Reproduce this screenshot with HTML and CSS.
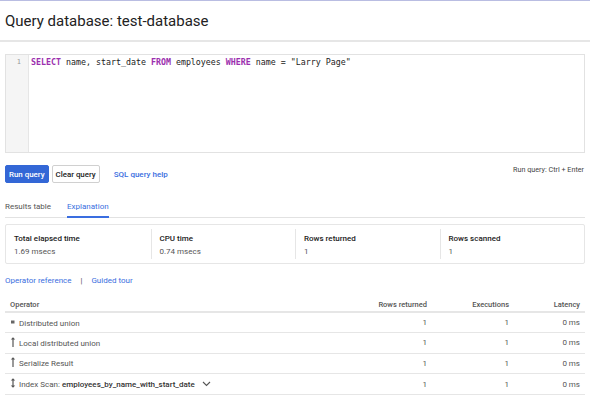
FILE: index.html
```html
<!DOCTYPE html>
<html lang="en">
<head>
    <meta charset="UTF-8">
    <title>Query database: test-database</title>
    <link rel="stylesheet" href="styles.css">
</head>
<body>
    <div class="page">
        <header class="title-bar">
            <h1>Query database: test-database</h1>
        </header>

        <div class="content">
            <div class="editor">
                <div class="gutter">1</div>
                <div class="code"><span class="kw">SELECT</span> name, start_date <span class="kw">FROM</span> employees <span class="kw">WHERE</span> name = "Larry Page"</div>
            </div>

            <div class="actions">
                <button class="btn btn-primary">Run query</button>
                <button class="btn">Clear query</button>
                <a class="link help-link" href="#">SQL query help</a>
                <span class="shortcut">Run query: Ctrl + Enter</span>
            </div>

            <div class="tabs">
                <div class="tab">Results table</div>
                <div class="tab active">Explanation</div>
            </div>

            <div class="stats">
                <div class="stat">
                    <h3>Total elapsed time</h3>
                    <p>1.69 msecs</p>
                </div>
                <div class="stat">
                    <h3>CPU time</h3>
                    <p>0.74 msecs</p>
                </div>
                <div class="stat">
                    <h3>Rows returned</h3>
                    <p>1</p>
                </div>
                <div class="stat">
                    <h3>Rows scanned</h3>
                    <p>1</p>
                </div>
            </div>

            <div class="ref-links">
                <a class="link" href="#">Operator reference</a>
                <span class="sep">|</span>
                <a class="link" href="#">Guided tour</a>
            </div>

            <table class="plan">
                <thead>
                    <tr>
                        <th class="op">Operator</th>
                        <th class="num">Rows returned</th>
                        <th class="num">Executions</th>
                        <th class="num">Latency</th>
                    </tr>
                </thead>
                <tbody>
                    <tr>
                        <td class="op"><span class="ico"><svg width="8" height="10" viewBox="0 0 8 10"><rect x="1" y="3.5" width="3.5" height="3" fill="#666"/></svg></span>Distributed union</td>
                        <td class="num">1</td>
                        <td class="num">1</td>
                        <td class="num">0 ms</td>
                    </tr>
                    <tr>
                        <td class="op"><span class="ico"><svg width="8" height="10" viewBox="0 0 8 10"><path d="M3 10V1.5" stroke="#555" stroke-width="1.2" fill="none"/><path d="M0.8 2.6L3 0.3 5.2 2.6z" fill="#555"/></svg></span>Local distributed union</td>
                        <td class="num">1</td>
                        <td class="num">1</td>
                        <td class="num">0 ms</td>
                    </tr>
                    <tr>
                        <td class="op"><span class="ico"><svg width="8" height="10" viewBox="0 0 8 10"><path d="M3 10V1.5" stroke="#555" stroke-width="1.2" fill="none"/><path d="M0.8 2.6L3 0.3 5.2 2.6z" fill="#555"/></svg></span>Serialize Result</td>
                        <td class="num">1</td>
                        <td class="num">1</td>
                        <td class="num">0 ms</td>
                    </tr>
                    <tr>
                        <td class="op"><span class="ico"><svg width="8" height="10" viewBox="0 0 8 10"><path d="M3 1.5v7" stroke="#555" stroke-width="1.2" fill="none"/><path d="M0.8 2.6L3 0.3 5.2 2.6z M0.8 7.4L3 9.7 5.2 7.4z" fill="#555"/></svg></span>Index Scan: <span class="idx">employees_by_name_with_start_date</span><svg class="chev" width="9" height="6" viewBox="0 0 9 6"><path d="M1 1l3.5 3.5L8 1" stroke="#555" stroke-width="1.1" fill="none"/></svg></td>
                        <td class="num">1</td>
                        <td class="num">1</td>
                        <td class="num">0 ms</td>
                    </tr>
                </tbody>
            </table>
        </div>
    </div>
</body>
</html>
```

FILE: styles.css
```css
* {
    margin: 0;
    padding: 0;
    box-sizing: border-box;
}

body {
    font-family: Roboto, 'Liberation Sans', Arial, sans-serif;
    color: #333;
    background-color: white;
}

.page {
    border-top: 1px solid #b9bde2;
}

.title-bar {
    height: 41px;
    border-bottom: 2px solid #e6e6e6;
    padding: 10px 5px 0;
}

.title-bar h1 {
    font-size: 15px;
    font-weight: 400;
    color: #222;
    line-height: 20px;
}

.content {
    padding: 12px 5px 0;
}

.editor {
    display: flex;
    height: 99px;
    border: 1px solid #e2e2e2;
}

.gutter {
    width: 23px;
    background-color: #f5f5f5;
    border-right: 1px solid #e6e6e6;
    color: #999;
    font-family: 'DejaVu Sans Mono', 'Liberation Mono', monospace;
    font-size: 7px;
    text-align: right;
    padding: 3px 7px 0 0;
}

.code {
    padding: 2px 0 0 2px;
    font-family: 'DejaVu Sans Mono', 'Liberation Mono', monospace;
    font-size: 8.3px;
    line-height: 11px;
    color: #222;
}

.kw {
    color: #9b2fae;
    font-weight: bold;
}

.actions {
    display: flex;
    align-items: center;
    margin-top: 12px;
    height: 18px;
}

.btn {
    font-family: Roboto, 'Liberation Sans', Arial, sans-serif;
    font-size: 7.9px;
    font-weight: 500;
    height: 18px;
    padding: 0 3px;
    border: 1px solid #d0d0d0;
    border-radius: 2px;
    background-color: white;
    color: #222;
    margin-right: 3px;
}

.btn-primary {
    background-color: #3367d6;
    border-color: #3367d6;
    color: white;
}

.link {
    color: #3a6ee0;
    text-decoration: none;
    font-size: 8px;
}

.help-link {
    margin-left: 11px;
    font-weight: 500;
}

.shortcut {
    margin-left: auto;
    margin-right: 1px;
    font-size: 7.2px;
    color: #444;
    align-self: flex-start;
}

.tabs {
    display: flex;
    margin-top: 15px;
    border-bottom: 1px solid #e2e2e2;
    height: 20px;
}

.tab {
    font-size: 8px;
    color: #555;
    margin-right: 16px;
    padding-top: 4px;
}

.tab.active {
    color: #3a6ee0;
    border-bottom: 2px solid #3a6ee0;
    margin-bottom: -1px;
}

.stats {
    display: grid;
    grid-template-columns: repeat(4, 1fr);
    margin-top: 6px;
    border: 1px solid #e6e6e6;
    border-radius: 2px;
    height: 40px;
    padding: 4px 0;
}

.stat {
    padding: 4px 8px 0;
    border-left: 1px solid #e6e6e6;
}

.stat:first-child {
    border-left: none;
}

.stat h3 {
    font-size: 8px;
    font-weight: 500;
    color: #222;
    line-height: 12px;
}

.stat p {
    font-size: 8px;
    color: #555;
    line-height: 14px;
}

.ref-links {
    margin-top: 12px;
    font-size: 8px;
    height: 14px;
}

.ref-links .sep {
    color: #555;
    margin: 0 7px;
}

.plan {
    width: 100%;
    border-collapse: collapse;
    margin-top: 7px;
    font-size: 8px;
}

.plan th {
    font-weight: 500;
    font-size: 7.5px;
    color: #555;
    height: 15px;
    border-bottom: 2px solid #e6e6e6;
}

.plan td {
    height: 20.6px;
    border-bottom: 1px solid #e6e6e6;
    color: #555;
}

.plan .op {
    text-align: left;
    padding-left: 5px;
}

.plan .num {
    text-align: right;
    padding-right: 5px;
}

.plan th:nth-child(2) {
    width: 150px;
}

.plan th:nth-child(3) {
    width: 82px;
}

.plan th:nth-child(4) {
    width: 71px;
}

.ico {
    display: inline-block;
    width: 9px;
    vertical-align: -1px;
}

.idx {
    color: #333;
    font-weight: 500;
}

.chev {
    margin-left: 7px;
    vertical-align: 0;
}
```
